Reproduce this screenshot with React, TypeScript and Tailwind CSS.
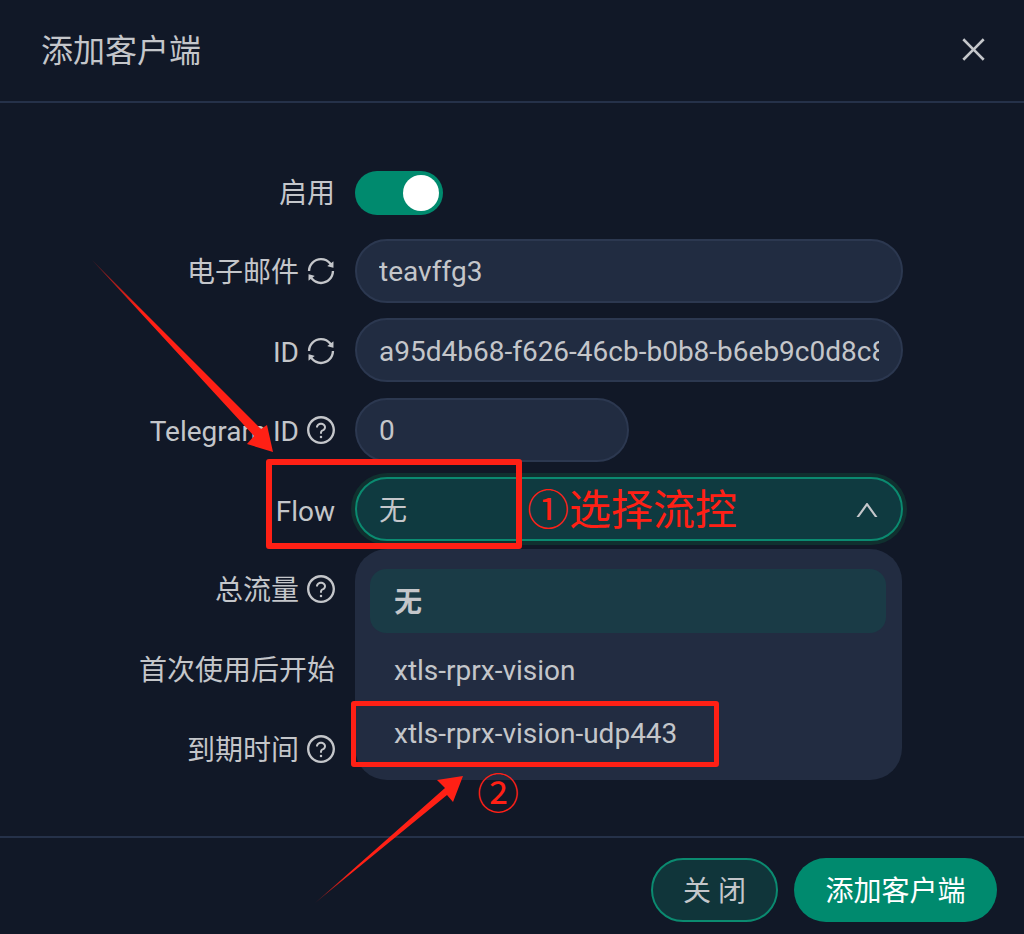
import React from "react";
import { AiOutlineClose, AiOutlineQuestionCircle, AiOutlineSync, AiOutlineUp } from "react-icons/ai";

const font = "font-['Roboto','Noto_Sans_CJK_SC',sans-serif]";

const Sync = () => <AiOutlineSync className="w-8 h-8 ml-[6px] -mr-[2px] shrink-0" />;
const Help = () => <AiOutlineQuestionCircle className="w-8 h-8 ml-[6px] -mr-[2px] shrink-0" />;

const Row = ({ label, icon, children }: { label: string; icon?: React.ReactNode; children?: React.ReactNode }) => (
  <div className="flex items-center h-16">
    <div className="w-[335px] shrink-0 pt-px flex items-center justify-end whitespace-nowrap">
      <span className="pt-1">{label}</span>
      {icon}
    </div>
    <div className="ml-5 w-[548px] relative">{children}</div>
  </div>
);

const TextField = ({ value, className }: { value: string; className?: string }) => (
  <div className={`h-16 rounded-[32px] border-2 border-[#2c3850] bg-[#212c41] px-[22px] flex items-center ${className ?? ""}`}>
    <div className="overflow-hidden whitespace-nowrap w-full pt-[3px]">{value}</div>
  </div>
);

export default function App() {
  return (
    <div className={`relative w-[1024px] h-[934px] overflow-hidden bg-[#111827] text-[28px] text-[#c4c6ca] ${font}`}>
      {/* header */}
      <div className="h-[103px] border-b-2 border-[#253149] pl-[41px] pr-[34px] pb-[2px] flex items-center justify-between">
        <div className="text-[32px] pt-[2px]">添加客户端</div>
        <AiOutlineClose className="w-[33px] h-[33px]" />
      </div>

      {/* form */}
      <div className="h-[733px] pt-[56px] flex flex-col gap-[15.6px]">
        <Row label="启用">
          <div className="mt-1 w-[88px] h-11 rounded-full bg-[#008a6e] flex items-center justify-end pr-1">
            <div className="w-9 h-9 rounded-full bg-white" />
          </div>
        </Row>
        <Row label="电子邮件" icon={<Sync />}>
          <TextField value="teavffg3" />
        </Row>
        <Row label="ID" icon={<Sync />}>
          <TextField value="a95d4b68-f626-46cb-b0b8-b6eb9c0d8c8f" />
        </Row>
        <Row label="Telegram ID" icon={<Help />}>
          <TextField value="0" className="w-[274px]" />
        </Row>
        <Row label="Flow">
          <div className="h-16 rounded-[32px] border-2 border-[#0b8a70] bg-[#0f3a40] shadow-[0_0_0_4px_#10302f] pl-[22px] pr-5 flex items-center justify-between">
            <span className="pt-1">无</span>
            <AiOutlineUp className="w-7 h-7 mt-[2px]" />
          </div>
          {/* dropdown */}
          <div className="absolute z-10 left-0 top-[72px] w-[547px] h-[231px] rounded-[32px] bg-[#222c41] pl-[15px] pr-4 pt-5">
            <div className="h-16 rounded-2xl bg-[#1a3b46] px-6 pt-1 flex items-center font-bold">无</div>
            <div className="h-[63px] mt-[5px] px-6 pt-[2px] flex items-center">xtls-rprx-vision</div>
            <div className="h-[63px] px-6 pt-[2px] flex items-center">xtls-rprx-vision-udp443</div>
          </div>
        </Row>
        <Row label="总流量" icon={<Help />} />
        <Row label="首次使用后开始" />
        <Row label="到期时间" icon={<Help />} />
      </div>

      {/* footer */}
      <div className="border-t-2 border-[#253149] pt-5 pr-[27px] flex justify-end gap-4">
        <div className="w-[127px] h-16 rounded-[32px] border-2 border-[#0b8a70] bg-[#10353a] pt-1 flex items-center justify-center">关 闭</div>
        <div className="w-[203px] h-16 rounded-[32px] bg-[#008a6e] text-white pt-1 flex items-center justify-center">添加客户端</div>
      </div>

      {/* red annotations on top of the screenshot */}
      <div className="absolute z-20 left-[266px] top-[459px] w-[256px] h-[90px] border-[6px] border-[#ff2015] rounded-[3px]" />
      <div className="absolute z-20 left-[351px] top-[701px] w-[368px] h-[66px] border-[5px] border-[#ff2015] rounded-[3px]" />
      <div className="absolute z-20 left-[527px] top-[478px] text-[42px] leading-[58px] text-[#ff2015] font-['Noto_Sans_CJK_SC',sans-serif] whitespace-nowrap">①选择流控</div>
      <div className="absolute z-20 left-[477px] top-[762px] text-[42px] leading-[58px] text-[#ff2015] font-['Noto_Sans_CJK_SC',sans-serif]">②</div>
      <svg className="absolute z-20 left-0 top-0 pointer-events-none" width="1024" height="934" viewBox="0 0 1024 934">
        <defs>
          <linearGradient id="arrowA" gradientUnits="userSpaceOnUse" x1="92" y1="260" x2="140" y2="310">
            <stop offset="0" stopColor="#ff2015" stopOpacity="0.35" />
            <stop offset="1" stopColor="#ff2015" />
          </linearGradient>
          <linearGradient id="arrowB" gradientUnits="userSpaceOnUse" x1="315" y1="903" x2="350" y2="872">
            <stop offset="0" stopColor="#ff2015" stopOpacity="0.35" />
            <stop offset="1" stopColor="#ff2015" />
          </linearGradient>
        </defs>
        <polygon fill="url(#arrowA)" points="92,260 261,429 267,425 273,452 247,444 254,436" />
        <polygon fill="url(#arrowB)" points="315,903 445,788 437,780 463,776 453,802 447,795" />
      </svg>
    </div>
  );
}
